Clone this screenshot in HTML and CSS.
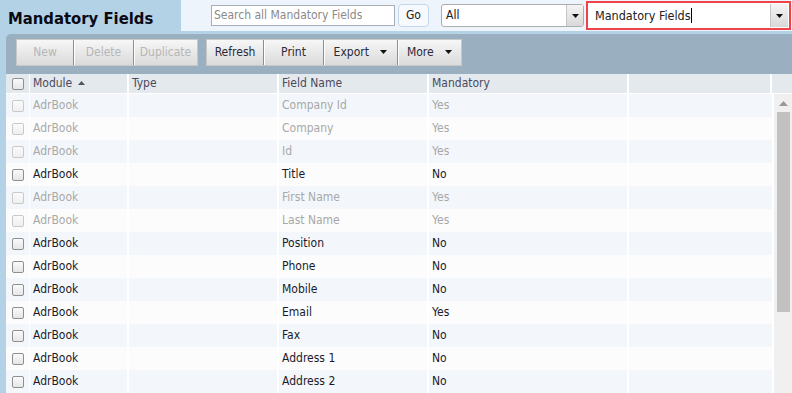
FILE: index.html
```html
<!DOCTYPE html>
<html>
<head>
<meta charset="utf-8">
<link rel="stylesheet" href="styles.css">
</head>
<body>
<div class="top">
  <h1 class="title">Mandatory Fields</h1>
  <div class="searchbar">
    <div class="search-input">Search all Mandatory Fields</div>
    <div class="go-btn">Go</div>
    <div class="select select-all">
      <span class="select-text">All</span>
      <span class="select-btn"><svg width="7" height="4" viewBox="0 0 7 4"><path d="M0 0h7L3.5 4z" fill="#111"/></svg></span>
    </div>
    <div class="select select-view">
      <span class="select-text">Mandatory Fields<span class="caret"></span></span>
      <span class="select-btn"><svg width="7" height="4" viewBox="0 0 7 4"><path d="M0 0h7L3.5 4z" fill="#111"/></svg></span>
    </div>
  </div>
</div>

<div class="toolbar">
  <div class="btn-group">
    <div class="btn disabled w56">New</div>
    <div class="btn disabled w60">Delete</div>
    <div class="btn disabled w64">Duplicate</div>
  </div>
  <div class="btn-group">
    <div class="btn w56">Refresh</div>
    <div class="btn w60">Print</div>
    <div class="btn w74 menu">Export <svg width="7" height="4" viewBox="0 0 7 4"><path d="M0 0h7L3.5 4z" fill="#111"/></svg></div>
    <div class="btn w64 menu">More <svg width="7" height="4" viewBox="0 0 7 4"><path d="M0 0h7L3.5 4z" fill="#111"/></svg></div>
  </div>
</div>

<div class="grid">
  <div class="ghead">
    <div class="cell cbcell"><span class="cb"></span></div>
    <div class="cell">Module <svg class="sort" width="7" height="4" viewBox="0 0 7 4"><path d="M3.5 0L7 4H0z" fill="#555"/></svg></div>
    <div class="cell">Type</div>
    <div class="cell">Field Name</div>
    <div class="cell">Mandatory</div>
    <div class="cell"></div>
    <div class="cell last"></div>
  </div>
  <div class="gbody">
    <div class="rows">
      <div class="row odd dim"><div class="cell cbcell"><span class="cb"></span></div><div class="cell">AdrBook</div><div class="cell"></div><div class="cell">Company Id</div><div class="cell">Yes</div><div class="cell"></div></div>
      <div class="row even dim"><div class="cell cbcell"><span class="cb"></span></div><div class="cell">AdrBook</div><div class="cell"></div><div class="cell">Company</div><div class="cell">Yes</div><div class="cell"></div></div>
      <div class="row odd dim"><div class="cell cbcell"><span class="cb"></span></div><div class="cell">AdrBook</div><div class="cell"></div><div class="cell">Id</div><div class="cell">Yes</div><div class="cell"></div></div>
      <div class="row even"><div class="cell cbcell"><span class="cb"></span></div><div class="cell">AdrBook</div><div class="cell"></div><div class="cell">Title</div><div class="cell">No</div><div class="cell"></div></div>
      <div class="row odd dim"><div class="cell cbcell"><span class="cb"></span></div><div class="cell">AdrBook</div><div class="cell"></div><div class="cell">First Name</div><div class="cell">Yes</div><div class="cell"></div></div>
      <div class="row even dim"><div class="cell cbcell"><span class="cb"></span></div><div class="cell">AdrBook</div><div class="cell"></div><div class="cell">Last Name</div><div class="cell">Yes</div><div class="cell"></div></div>
      <div class="row odd"><div class="cell cbcell"><span class="cb"></span></div><div class="cell">AdrBook</div><div class="cell"></div><div class="cell">Position</div><div class="cell">No</div><div class="cell"></div></div>
      <div class="row even"><div class="cell cbcell"><span class="cb"></span></div><div class="cell">AdrBook</div><div class="cell"></div><div class="cell">Phone</div><div class="cell">No</div><div class="cell"></div></div>
      <div class="row odd"><div class="cell cbcell"><span class="cb"></span></div><div class="cell">AdrBook</div><div class="cell"></div><div class="cell">Mobile</div><div class="cell">No</div><div class="cell"></div></div>
      <div class="row even"><div class="cell cbcell"><span class="cb"></span></div><div class="cell">AdrBook</div><div class="cell"></div><div class="cell">Email</div><div class="cell">Yes</div><div class="cell"></div></div>
      <div class="row odd"><div class="cell cbcell"><span class="cb"></span></div><div class="cell">AdrBook</div><div class="cell"></div><div class="cell">Fax</div><div class="cell">No</div><div class="cell"></div></div>
      <div class="row even"><div class="cell cbcell"><span class="cb"></span></div><div class="cell">AdrBook</div><div class="cell"></div><div class="cell">Address 1</div><div class="cell">No</div><div class="cell"></div></div>
      <div class="row odd"><div class="cell cbcell"><span class="cb"></span></div><div class="cell">AdrBook</div><div class="cell"></div><div class="cell">Address 2</div><div class="cell">No</div><div class="cell"></div></div>
    </div>
    <div class="vscroll">
      <div class="arrow-up"><svg width="9" height="5" viewBox="0 0 9 5"><path d="M4.5 0L9 5H0z" fill="#999"/></svg></div>
      <div class="thumb"></div>
    </div>
  </div>
</div>
</body>
</html>
```

FILE: styles.css
```css
html, body {
  margin: 0;
  padding: 0;
}
body {
  width: 792px;
  height: 393px;
  overflow: hidden;
  background: #b4d2e6;
  font-family: "DejaVu Sans Condensed", "DejaVu Sans", sans-serif;
  font-stretch: condensed;
  font-size: 12px;
  color: #2a2a36;
}

/* top bar */
.top {
  display: flex;
  height: 34px;
}
.title {
  margin: 0;
  width: 181px;
  box-sizing: border-box;
  padding: 9px 0 0 8px;
  font-size: 16.5px;
  font-weight: bold;
  color: #0a0a14;
  line-height: 20px;
  white-space: nowrap;
}
.searchbar {
  flex: 1;
  height: 31px;
  background: #eef4fb;
  display: flex;
  align-items: flex-start;
  box-sizing: border-box;
  padding-left: 30px;
}
.search-input {
  margin-top: 5px;
  width: 184px;
  height: 21px;
  box-sizing: border-box;
  border: 1px solid #aaadb3;
  background: #fff;
  color: #8a8a8a;
  padding: 0 0 0 2px;
  line-height: 19px;
  white-space: nowrap;
}
.go-btn {
  margin: 4px 0 0 3px;
  width: 31px;
  height: 23px;
  box-sizing: border-box;
  border: 1px solid #c3d7ea;
  border-radius: 4px;
  background: #f6f9fd;
  text-align: center;
  line-height: 21px;
  color: #222;
}
.select {
  display: flex;
  box-sizing: border-box;
  background: #fff;
}
.select-all {
  margin: 4px 0 0 12px;
  width: 143px;
  height: 23px;
  border: 1px solid #adadad;
  border-radius: 3px;
}
.select-text {
  flex: 1;
  padding-left: 4px;
  line-height: 21px;
  white-space: nowrap;
  color: #222;
}
.select-btn {
  width: 16px;
  display: flex;
  align-items: center;
  justify-content: center;
  border-left: 1px solid #c4c4c4;
  background: linear-gradient(#f4f4f4, #d9d9d9);
}
.select-view {
  margin: 1px 0 0 2px;
  width: 205px;
  height: 29px;
  border: 2px solid #f0424b;
  padding: 1px 1px 1px 0;
}
.select-view .select-text {
  padding-left: 7px;
  line-height: 23px;
  font-size: 12.5px;
}
.select-view .select-btn {
  width: 17px;
}
.caret {
  display: inline-block;
  width: 1px;
  height: 15px;
  background: #000;
  vertical-align: -3px;
}

/* toolbar */
.toolbar {
  margin-left: 6px;
  height: 40px;
  background: #9ab0c1;
  border-top-left-radius: 5px;
  display: flex;
  gap: 8px;
  padding: 4px 0 0 10px;
  box-sizing: border-box;
  align-items: flex-start;
}
.btn-group {
  display: flex;
  height: 27px;
  margin-top: 1px;
  border: 1px solid #c8c8c8;
  box-sizing: border-box;
  background: linear-gradient(#f7f7f7, #dadada);
}
.btn {
  box-sizing: border-box;
  height: 100%;
  line-height: 25px;
  text-align: center;
  color: #2a2a3a;
  border-left: 1px solid #8d8d8d;
  box-shadow: inset 1px 0 0 #fff;
}
.btn:first-child {
  border-left: none;
  box-shadow: none;
}
.btn.disabled {
  color: #b6b6b6;
}
.btn.menu svg {
  margin-left: 8px;
  vertical-align: 2px;
}
.w56 { width: 56px; }
.w60 { width: 60px; }
.w64 { width: 64px; }
.w74 { width: 74px; }

/* grid */
.grid {
  margin-left: 6px;
}
.ghead {
  display: grid;
  grid-template-columns: 24px 99px 150px 150px 200px 143px 20px;
  height: 19px;
  border-bottom: 1px solid #fff;
  box-sizing: content-box;
}
.ghead .cell {
  background: #e4e9ed;
  color: #4a4a5c;
  line-height: 19px;
}
.ghead .cell.last {
  border-right: none;
  padding: 0;
}
.cell {
  box-sizing: border-box;
  border-right: 2px solid #fff;
  padding-left: 3px;
  white-space: nowrap;
  overflow: hidden;
}
.cbcell {
  display: flex;
  align-items: center;
  padding-left: 6px;
  border-right-width: 1px;
}
.cb {
  display: inline-block;
  width: 12px;
  height: 12px;
  box-sizing: border-box;
  border: 1px solid #8f8f8f;
  border-radius: 2px;
  background: linear-gradient(#fafafa, #e6e6e6);
}
.dim .cb {
  border-color: #c9c9c9;
  background: linear-gradient(#fbfbfb, #efefef);
}
.sort {
  margin-left: 2px;
  vertical-align: 2px;
}
.gbody {
  display: flex;
}
.rows {
  width: 768px;
}
.row {
  display: grid;
  grid-template-columns: 24px 99px 150px 150px 200px 145px;
  height: 23px;
  line-height: 23px;
  color: #1a1a2a;
}
.row.odd .cell { background: #f3f7fb; }
.row.even .cell { background: #fcfcfc; }
.row.dim { color: #a8a8a8; }
.vscroll {
  width: 18px;
  height: 300px;
  background: #f0f0f0;
  display: flex;
  flex-direction: column;
  align-items: center;
}
.arrow-up {
  height: 17px;
  display: flex;
  align-items: center;
  justify-content: center;
  padding-top: 1px;
}
.thumb {
  width: 13px;
  height: 200px;
  background: #c1c1c1;
}
```
